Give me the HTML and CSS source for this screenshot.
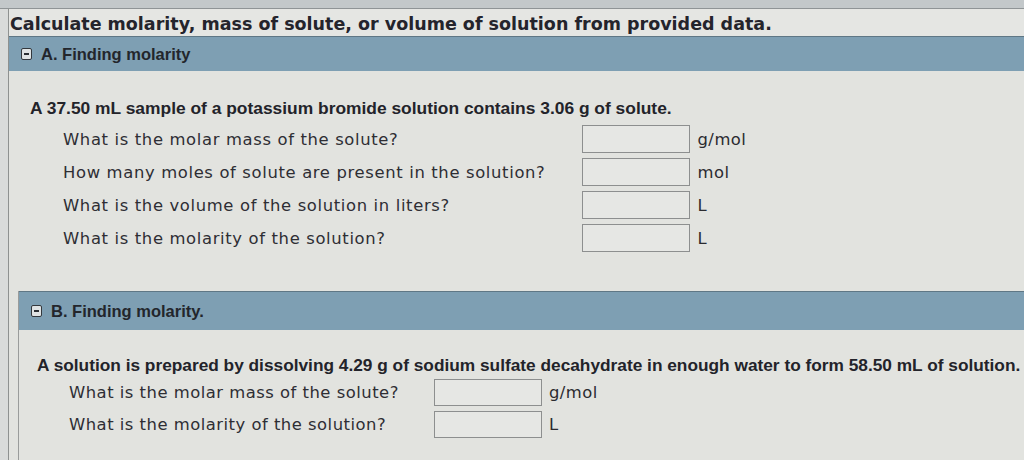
FILE: index.html
```html
<!DOCTYPE html>
<html>
<head>
<meta charset="utf-8">
<link rel="stylesheet" href="styles.css">
</head>
<body>
<div class="topstrip"></div>
<div class="page">
  <div class="gutter"></div>
  <div class="main">
    <div class="title">Calculate molarity, mass of solute, or volume of solution from provided data.</div>
    <div class="section sec-a">
      <div class="bar"><span class="toggle"></span><span class="bar-label">A. Finding molarity</span></div>
      <div class="body">
        <p class="lead">A 37.50 mL sample of a potassium bromide solution contains 3.06 g of solute.</p>
        <div class="qgrid">
          <span class="q">What is the molar mass of the solute?</span><span class="box"></span><span class="unit">g/mol</span>
          <span class="q">How many moles of solute are present in the solution?</span><span class="box"></span><span class="unit">mol</span>
          <span class="q">What is the volume of the solution in liters?</span><span class="box"></span><span class="unit">L</span>
          <span class="q">What is the molarity of the solution?</span><span class="box"></span><span class="unit">L</span>
        </div>
      </div>
    </div>
    <div class="section sec-b">
      <div class="bar"><span class="toggle"></span><span class="bar-label">B. Finding molarity.</span></div>
      <div class="body">
        <p class="lead">A solution is prepared by dissolving 4.29 g of sodium sulfate decahydrate in enough water to form 58.50 mL of solution.</p>
        <div class="qgrid">
          <span class="q">What is the molar mass of the solute?</span><span class="box"></span><span class="unit">g/mol</span>
          <span class="q">What is the molarity of the solution?</span><span class="box"></span><span class="unit">L</span>
        </div>
      </div>
    </div>
  </div>
</div>
</body>
</html>
```
FILE: styles.css
```css
html, body {
  margin: 0;
  padding: 0;
}
body {
  width: 1024px;
  height: 460px;
  overflow: hidden;
  background: #e2e3df;
  color: #26262c;
  font-family: "DejaVu Sans", Verdana, sans-serif;
}
.topstrip {
  height: 8px;
  background: #c3c8ca;
  border-bottom: 1px solid #8f9496;
}
.page {
  display: flex;
  height: 451px;
}
.gutter {
  width: 8px;
  flex: none;
  background: #d9dbda;
  border-right: 1px solid #8e9190;
}
.main {
  flex: 1;
  min-width: 0;
}
.title {
  height: 27px;
  line-height: 31px;
  padding-left: 1px;
  font-weight: bold;
  font-size: 17.5px;
  letter-spacing: 0;
  white-space: nowrap;
  background: #e5e6e3;
  color: #24242c;
}
.bar {
  height: 34px;
  display: flex;
  align-items: center;
  background: #7e9fb3;
  border-top: 1px solid #5f7785;
  font-family: "Liberation Sans", Arial, sans-serif;
  font-weight: bold;
  font-size: 16.5px;
  color: #23262c;
}
.toggle {
  width: 9px;
  height: 10px;
  border: 1.5px solid #33383d;
  background: #dfe3e4;
  border-radius: 2px;
  margin-left: 12px;
  margin-right: 9px;
  position: relative;
  flex: none;
}
.toggle::after {
  content: "";
  position: absolute;
  left: 2px;
  top: 4.2px;
  width: 5px;
  height: 1.6px;
  background: #2a2e33;
}
.bar-label {
  letter-spacing: 0;
}
.body {
  background: #e2e3df;
}
.sec-a .body {
  padding: 28px 0 0 21px;
  height: 192px;
}
.lead {
  margin: 0;
  font-family: "Liberation Sans", Arial, sans-serif;
  font-weight: bold;
  font-size: 17.3px;
  letter-spacing: 0;
  line-height: 18px;
  white-space: nowrap;
  color: #23232a;
}
.sec-a .lead {
  font-size: 17.4px;
}
.qgrid {
  display: grid;
  grid-template-columns: max-content 108px max-content;
  column-gap: 0;
  row-gap: 5px;
  align-items: center;
  margin-left: 33px;
  margin-top: 8px;
}
.q {
  font-size: 16.4px;
  color: #2e2e34;
  padding-right: 37px;
  letter-spacing: 0.5px;
  white-space: nowrap;
}
.sec-a .q {
  letter-spacing: 0.65px;
}
.box {
  height: 28px;
  border: 1px solid #8d8f8f;
  background: #e6e7e4;
  box-sizing: border-box;
}
.unit {
  font-size: 16.4px;
  letter-spacing: 0.5px;
  color: #2b2b30;
  padding-left: 7px;
}
.sec-b {
  margin-left: 9px;
  border-left: 1px solid #9a9c9b;
}
.sec-b .bar {
  height: 38px;
}
.sec-b .body {
  padding: 26px 0 0 18px;
  height: 120px;
}
.sec-b .qgrid {
  margin-left: 32px;
  row-gap: 5px;
  margin-top: 5px;
}
.sec-b .box {
  height: 27px;
}
.sec-b .q {
  padding-right: 35px;
}
```
